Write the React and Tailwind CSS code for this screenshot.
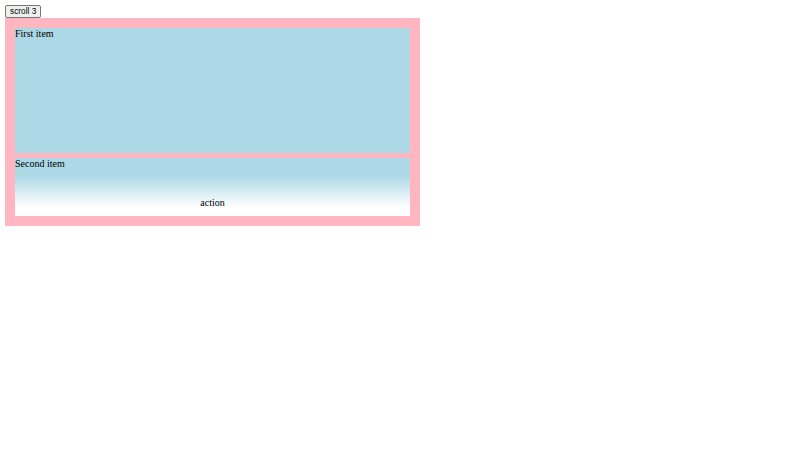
export default function App() {
  return (
    <div className="w-[800px] h-[450px] bg-white" style={{ fontFamily: '"Liberation Serif", serif' }}>
      <div className="pt-[5px] pl-[5px]">
        <button
          className="block h-[13px] px-[4px] border border-[#767676] rounded-[2px] bg-[#efefef] text-[8.3px] leading-[11px] text-black"
          style={{ fontFamily: '"Liberation Sans", Arial, sans-serif' }}
        >
          scroll 3
        </button>
      </div>
      <div className="ml-[5px] w-[415px] bg-[#ffb6c1] p-[10px] flex flex-col gap-[5px]">
        <div className="h-[125px] bg-[#add8e6] text-[10px] leading-[11px] text-black">First item</div>
        <div className="h-[58px] flex flex-col bg-[linear-gradient(to_bottom,#add8e6_30%,#ffffff_85%)] text-[10px] leading-[11px] text-black">
          <div>Second item</div>
          <div className="mt-auto mb-[8px] text-center">action</div>
        </div>
      </div>
    </div>
  );
}
